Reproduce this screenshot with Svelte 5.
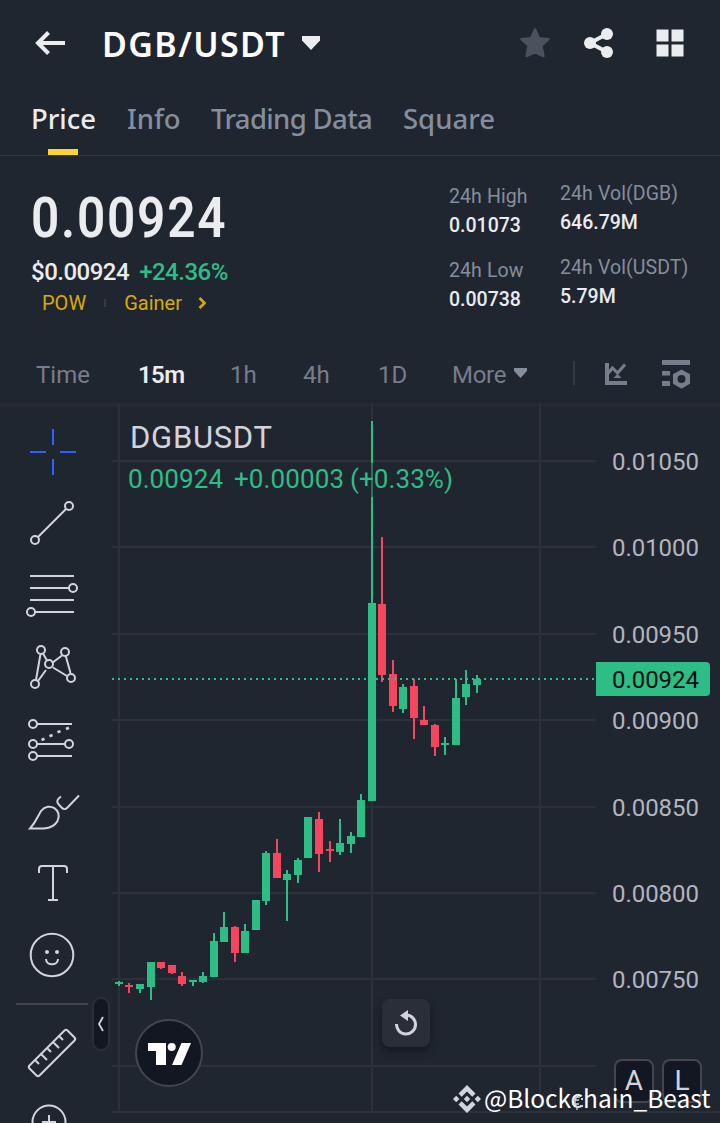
<script>
  const tabs = ['Price', 'Info', 'Trading Data', 'Square'];
  const intervals = ['Time', '15m', '1h', '4h', '1D'];
  const stats = [
    ['24h High', '0.01073'],
    ['24h Low', '0.00738'],
    ['24h Vol(DGB)', '646.79M'],
    ['24h Vol(USDT)', '5.79M'],
  ];
  const levels = [
    [461, '0.01050'], [547, '0.01000'], [634, '0.00950'], [720, '0.00900'],
    [807, '0.00850'], [893, '0.00800'], [979, '0.00750'], [1066, ''],
  ];
  const verticals = [119, 372, 540];
  // centre x, wick top, wick bottom, body top, body bottom, rising
  const candles = [
    [119, 981, 986, 982, 984, 1], [129, 983, 993, 985, 987, 0], [140, 984, 993, 984, 989, 1],
    [151, 962, 1000, 962, 987, 1], [161, 962, 969, 962, 968, 0], [172, 965, 974, 965, 973, 0],
    [182, 972, 986, 976, 984, 0], [193, 980, 986, 980, 982, 1], [203, 972, 983, 976, 982, 1],
    [214, 933, 977, 941, 977, 1], [224, 912, 942, 927, 942, 1], [235, 926, 962, 927, 953, 0],
    [245, 924, 953, 931, 953, 1], [256, 900, 930, 900, 930, 1], [266, 851, 905, 853, 901, 1],
    [277, 839, 878, 853, 878, 0], [287, 870, 921, 874, 880, 1], [298, 858, 883, 860, 875, 1],
    [308, 817, 858, 817, 858, 1], [319, 812, 872, 819, 854, 0], [330, 841, 862, 849, 851, 0],
    [340, 819, 855, 843, 852, 1], [351, 832, 853, 836, 844, 1], [361, 794, 837, 800, 837, 1],
    [372, 421, 801, 603, 801, 1], [382, 537, 682, 604, 675, 0], [393, 660, 712, 674, 706, 0],
    [403, 684, 713, 687, 709, 1], [414, 679, 739, 686, 718, 0], [424, 706, 725, 720, 725, 0],
    [435, 724, 756, 725, 747, 0], [445, 737, 755, 743, 745, 1], [456, 679, 745, 698, 745, 1],
    [466, 670, 705, 684, 697, 1], [477, 675, 693, 679, 685, 1],
  ];
</script>

<div class="app">
  <header>
    <svg class="back" width="30" height="24" viewBox="0 0 30 24"><path d="M13.500 1.500 3 12l10.500 10.500M3 12h27" fill="none" stroke="#eaecef" stroke-width="4" /></svg>
    <h1>DGB/USDT</h1>
    <svg class="caret" width="18" height="14" viewBox="0 0 18 14"><path d="M0 0h18v4.500L9 14 0 4.500z" fill="#eaecef" /></svg>
    <div class="actions">
      <svg width="30" height="30" viewBox="0 0 30 30"><path d="M15 1.500l3.900 8.700 9.600 1-7.100 6.500 2 10.300L15 24l-8.400 4 2-10.300-7.100-6.500 9.600-1z" fill="#4b515d" stroke="#4b515d" stroke-width="2.500" stroke-linejoin="round" /></svg>
      <svg class="share" width="30" height="30" viewBox="0 0 30 30"><path d="M23 6 6 15l17 9" fill="none" stroke="#eaecef" stroke-width="4" /><g fill="#eaecef"><circle cx="23" cy="6" r="6" /><circle cx="6" cy="15" r="6" /><circle cx="23" cy="24" r="6" /></g></svg>
      <svg width="28" height="28" viewBox="0 0 28 28"><path d="M.5.5h12v12H.5zM15.500.5h12v12h-12zM.5 15.500h12v12H.5zM15.500 15.500h12v12h-12z" fill="#eaecef" /></svg>
    </div>
  </header>

  <nav class="tabs">
    {#each tabs as tab, i}
      <span class:active={i === 0} class:wide={i === 2}>{tab}</span>
    {/each}
  </nav>

  <section class="summary">
    <div class="quote">
      <div class="price">0.00924</div>
      <div class="fiat"><span>$0.00924</span><span class="up">+24.36%</span></div>
      <div class="tags">
        <span class="pow">POW</span><i></i><span>Gainer</span>
        <svg width="9" height="12" viewBox="0 0 9 12"><path d="M1.500 1 6.500 6l-5 5" fill="none" stroke="#d9a90c" stroke-width="2.600" /></svg>
      </div>
    </div>
    <dl class="stats">
      {#each stats as [name, value]}
        <div><dt>{name}</dt><dd>{value}</dd></div>
      {/each}
    </dl>
  </section>

  <nav class="intervals">
    {#each intervals as item}
      <span class:active={item === '15m'}>{item}</span>
    {/each}
    <span class="more">More<svg width="13" height="10" viewBox="0 0 13 10"><path d="M0 0h13v3L6.500 10 0 3z" fill="#848e9c" /></svg></span>
    <i></i>
    <svg class="kind" width="24" height="24" viewBox="0 0 24 24"><g fill="none" stroke="#777d8a"><path d="M3 1v20h20" stroke-width="4" /><path d="M4 11.500 8.500 6l5 5L21 2.500" stroke-width="3" /></g><path d="m13.500 12 4 4h-8z" fill="#777d8a" /></svg>
    <svg width="28" height="29" viewBox="0 0 28 29"><path d="M0 0h28v5H0zM0 11h8v4.500H0zM0 21h8v5H0zM19.500 9.500l8.500 4.800v9.500l-8.500 4.900-8.500-4.900v-9.500z" fill="#777d8a" /><circle cx="19.500" cy="19" r="4" fill="#202630" /></svg>
  </nav>

  <main>
    <aside>
      <div class="tools">
        <svg viewBox="0 0 56 56"><path d="M29 5v16M29 35v16M6 28h16M36 28h16" stroke="#2962ff" stroke-width="2" /></svg>
        <svg viewBox="0 0 56 56"><path d="M14 41 42 13" /><circle cx="11" cy="44" r="4" /><circle cx="45" cy="10" r="4" /></svg>
        <svg viewBox="0 0 56 56"><path d="M6 8h44M6 20h39M6 32h44M11 44h39" /><circle cx="49" cy="20" r="4" /><circle cx="7" cy="44" r="4" /></svg>
        <svg viewBox="0 0 56 56"><path d="M16.500 14 12 40M19 13.500l4 7M14 41l8-11M28 23l10-7.500M29 27.500l14 8.500M41.500 15l5 18" /><circle cx="17" cy="10" r="4" /><circle cx="41" cy="12" r="4" /><circle cx="25" cy="24" r="4" /><circle cx="11" cy="44" r="4" /><circle cx="47" cy="38" r="4" /></svg>
        <svg viewBox="0 0 56 56"><path d="M13 12h35M13 32h28M13 44h35" /><circle cx="9" cy="12" r="4" /><circle cx="9" cy="32" r="4" /><circle cx="9" cy="44" r="4" /><circle cx="45" cy="32" r="4" /><path d="m17.500 28 3-1.200M25.500 24.200l3-1.200M33.500 20.300l3-1.200M42 17l3-1.200" stroke-width="2.600" /></svg>
        <svg viewBox="0 0 56 56"><path d="M6 44.500C12 38 14 32 17 27c8-10 22-1 16.500 10-3 5.500-7.500 7-13.500 7.500zM37 12.500c-6 4.500-4 6.500.5 11 2.500 2.500 4 2 6 0L55 11.500" /></svg>
        <svg viewBox="0 0 56 56"><path d="M15 17v-4q0-3 3-3h22q3 0 3 3v4M29 10v34M24 44h10" /></svg>
        <svg viewBox="0 0 56 56"><circle cx="28" cy="27" r="21.300" /><path d="M22 31c0 7 12 7 12 0" /><g fill="#d1d4dc" stroke="none"><circle cx="23" cy="24" r="2" /><circle cx="33" cy="24" r="2" /></g></svg>
      </div>
      <hr />
      <div class="tools lower">
        <svg viewBox="0 0 56 56"><path d="m5.500 40.500 35-35q1.500-1.500 3 0l7 7q1.500 1.500 0 3l-35 35q-1.500 1.500-3 0l-7-7q-1.500-1.500 0-3zM11 35l4 4M17 29l6 6M23 23l4 4M29 17l6 6M35 11l4 4" /></svg>
        <svg viewBox="0 0 56 56"><circle cx="25" cy="25" r="16.500" /><path d="M25 18v14M18 25h14" /></svg>
      </div>
    </aside>

    <svg class="chart" width="608" height="719" viewBox="112 404 608 719">
      <g fill="#2b303a">
        {#each verticals as x}<rect x={x - 1} y="404" width="2" height="707" />{/each}
        {#each levels as [y]}<rect x="112" y={y - 1} width="484" height="2" />{/each}
        <rect x="112" y="1111" width="608" height="2" />
      </g>
      {#each candles as [x, high, low, top, bottom, up]}
        <g fill={up ? '#2ebd85' : '#f6465d'}>
          <rect x={x - 1} y={high} width="2" height={low - high} />
          <rect x={x - 4} y={top} width="8" height={bottom - top} />
        </g>
      {/each}
      <path d="M112 679H596" stroke="#2ebd85" stroke-width="2" stroke-dasharray="2 4" />
      <rect x="126" y="463" width="330" height="34" fill="#202630" opacity=".5" />
      <text class="symbol" x="130" y="448" textLength="142">DGBUSDT</text>
      <g class="change">
        <text x="128" y="488" textLength="95">0.00924</text>
        <text x="234" y="488" textLength="110">+0.00003</text>
        <text x="350" y="488" textLength="103">(+0.33%)</text>
      </g>
      <g class="scale">
        {#each levels as [y, label]}
          {#if label}<text x="612" y={y + 9} textLength="87">{label}</text>{/if}
        {/each}
      </g>
      <path d="M596 662h110q4 0 4 4v26q0 4-4 4H596z" fill="#2ebd85" />
      <text class="last" x="612" y="688" textLength="87">0.00924</text>
      <circle cx="169" cy="1053" r="33" fill="#131722" stroke="#434651" stroke-width="2" />
      <path d="M148 1043h18v22h-10v-14h-8zM181.500 1043h9.500l-9.500 22h-9.500z" fill="#fff" /><circle cx="171.700" cy="1047" r="4" fill="#fff" />
    </svg>

    <button class="collapse" aria-label="Collapse"><svg width="8" height="16" viewBox="0 0 8 16"><path d="M6 1 2 8l4 7" fill="none" stroke="#d1d4dc" stroke-width="1.800" /></svg></button>
    <button class="reset" aria-label="Reset"><svg width="24" height="26" viewBox="0 0 24 26"><path d="M2.500 14A9.500 9.500 0 1 0 12 5" fill="none" stroke="#d1d4dc" stroke-width="3" /><path d="M6 5.500 14 0v11z" fill="#d1d4dc" /></svg></button>
    <div class="modes"><span>A</span><span>L</span></div>
    <div class="credit">
      <svg width="28" height="28" viewBox="0 0 28 28" fill="#d1d4dc"><path d="m14 0 8.500 8.500-3.200 3.200L14 6.400l-5.300 5.300-3.200-3.200zM14 28l8.500-8.500-3.200-3.200-5.300 5.300-5.300-5.300-3.200 3.200zM14 10.800l3.200 3.200-3.200 3.200-3.200-3.200zM3.200 10.800 6.400 14l-3.200 3.200L0 14zM24.800 10.800 28 14l-3.200 3.200-3.200-3.200z" /></svg>
      <span>@Blockchain_Beast</span>
      <svg class="gear" width="12" height="16" viewBox="0 0 12 16"><path d="M8 3H6Q3 3 3 8t3 5h2M0 6h7M0 10h7M5 0v3M5 13v3" fill="none" stroke="#d1d4dc" stroke-width="1.300" /><path d="M9 4h2v2H9zM9 11h2v2H9z" fill="#d1d4dc" /></svg>
    </div>
  </main>
</div>

<style>
  :global(body) { margin: 0; background: #202630; }
  .app { width: 720px; height: 1123px; overflow: hidden; display: flex; flex-direction: column; background: #202630; color: #eaecef; font-family: Roboto, sans-serif; }
  svg { display: block; flex: none; }
  header { height: 88px; box-sizing: border-box; padding: 0 36px 2px 35px; display: flex; align-items: center; }
  h1 { margin: 1px 0 0 37px; width: 183px; font: 600 34px/44px "Noto Sans", sans-serif; letter-spacing: 1.400px; color: #fff; white-space: nowrap; }
  .caret { margin-left: 17px; }
  .actions { margin-left: auto; display: flex; align-items: center; gap: 34px; }
  .actions svg:last-child { margin-left: 8px; }
  .tabs { height: 68px; box-sizing: border-box; border-bottom: 1px solid #333a45; padding-left: 31px; display: grid; grid-template-columns: 65px 53px 161px 91px; column-gap: 31px; font: 500 27.500px/62px "Noto Sans", sans-serif; color: #848e9c; white-space: nowrap; }
  .tabs .active { color: #eaecef; display: flex; flex-direction: column; align-items: center; }
  .tabs .active::after { content: ""; width: 30px; height: 6px; margin: -1px 2px 0 0; background: #fcd535; }
  .tabs .wide { letter-spacing: -.65px; }
  .summary { height: 187px; display: flex; }
  .quote { width: 418px; padding-left: 31px; }
  .price { margin-top: 30px; font-size: 56px; font-weight: 600; line-height: 64px; letter-spacing: 2px; transform: scaleX(.885); transform-origin: left; }
  .fiat { margin-top: 7px; display: flex; gap: 10px; font-size: 24px; font-weight: 500; line-height: 30px; letter-spacing: -.5px; }
  .up { color: #2ebd85; }
  .tags { display: flex; align-items: center; padding-left: 11px; color: #d9a90c; font-size: 20px; line-height: 32px; }
  .tags i { width: 2px; height: 8px; background: #333b47; margin: 0 18px; }
  .tags svg { margin-left: 16px; }
  .stats { margin: 26px 0 0; display: grid; grid-template-columns: 111px 150px; grid-template-rows: 74px 74px; grid-auto-flow: column; font-size: 19.500px; line-height: 29px; white-space: nowrap; }
  .stats > :nth-child(n+3) { margin-top: -3px; }
  dt { color: #848e9c; letter-spacing: .1px; }
  dd { margin: 0; font-weight: 500; }
  .intervals { height: 56px; display: flex; align-items: center; padding: 4px 0 0 36px; border-bottom: 4px solid #262a34; margin-bottom: -3px; font-size: 24px; line-height: 32px; color: #777d8a; }
  .intervals > span:nth-child(1) { width: 102px; }
  .intervals > span:nth-child(2) { width: 92px; }
  .intervals > span:nth-child(3) { width: 73px; }
  .intervals > span:nth-child(4) { width: 75px; }
  .intervals > span:nth-child(5) { width: 74px; }
  .intervals .active { color: #eaecef; font-weight: 600; letter-spacing: -.6px; }
  .more { display: flex; align-items: center; gap: 8px; width: 121px; letter-spacing: -.3px; }
  .more svg { margin-top: -4px; }
  .intervals i { width: 2px; height: 24px; background: #333a45; margin: -4px 29px 0 0; }
  .intervals > svg { margin-top: -2px; }
  .kind { margin-right: 34px; }
  main { position: relative; display: flex; height: 719px; }
  aside { width: 112px; padding-top: 20px; }
  .tools { display: flex; flex-direction: column; gap: 16px; padding-left: 24px; }
  .tools svg { width: 56px; height: 56px; fill: none; stroke: #d1d4dc; stroke-width: 2; }
  hr { width: 72px; height: 2px; border: 0; margin: 19px 0 20px 16px; background: #434651; }
  text { font-family: Roboto, sans-serif; }
  .symbol { font-size: 31px; fill: #d1d4dc; }
  .change { font-size: 26px; fill: #2ebd85; }
  .scale { font-size: 24px; fill: #b2b5be; }
  .last { font-size: 24px; fill: #0c0e12; }
  button { position: absolute; padding: 0; display: flex; align-items: center; justify-content: center; }
  .collapse { left: 92px; top: 593px; width: 18px; height: 54px; border: 2px solid #2a2e39; border-radius: 9px; background: #131722; }
  .reset { left: 382px; top: 595px; width: 48px; height: 48px; border: 0; border-radius: 8px; background: #2a2e39; box-shadow: 0 4px 8px #0006; }
  .modes { position: absolute; right: 18px; top: 655px; display: flex; gap: 8px; }
  .modes span { box-sizing: border-box; width: 40px; height: 44px; border: 2px solid #434651; border-radius: 8px; background: #131722; text-align: center; font-size: 28px; line-height: 39px; color: #d1d4dc; }
  .credit { position: absolute; left: 453px; top: 681px; display: flex; align-items: center; gap: 3px; font: 400 24.500px/28px "Noto Sans CJK SC", sans-serif; color: #fff; white-space: nowrap; }
  .credit span { margin-top: -3px; }
  .gear { position: absolute; left: 119px; top: 9px; }
</style>
